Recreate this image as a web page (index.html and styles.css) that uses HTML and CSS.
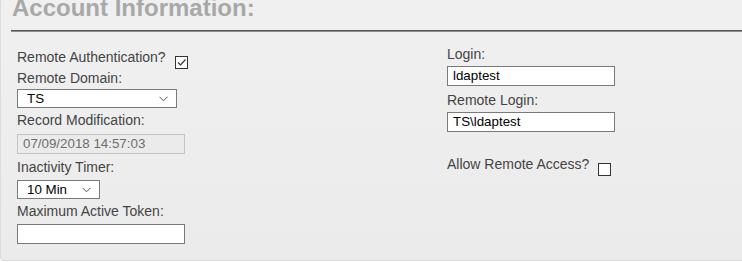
FILE: index.html
```html
<!DOCTYPE html>
<html>
<head>
<meta charset="utf-8">
<link rel="stylesheet" href="styles.css">
</head>
<body>
<div class="panel">
  <div class="title">Account Information:</div>
  <div class="rule"></div>
  <div class="cols">
    <div class="col col-left">
      <div class="check-row r-auth">
        <span class="lbl">Remote Authentication?</span>
        <span class="cbox checked">
          <svg width="11" height="11" viewBox="0 0 11 11"><path d="M2 5.5 L4.5 8 L9.5 2.5" fill="none" stroke="#333" stroke-width="1.2"/></svg>
        </span>
      </div>
      <div class="lbl m3">Remote Domain:</div>
      <div class="sel sel-domain m4">
        <span class="sel-text">TS</span>
        <svg class="chev" width="9" height="6" viewBox="0 0 9 6"><path d="M0.5 0.8 L4.5 4.8 L8.5 0.8" fill="none" stroke="#555" stroke-width="1"/></svg>
      </div>
      <div class="lbl m6">Record Modification:</div>
      <div class="inp disabled m5">07/09/2018 14:57:03</div>
      <div class="lbl m5">Inactivity Timer:</div>
      <div class="sel sel-timer m4">
        <span class="sel-text">10 Min</span>
        <svg class="chev" width="9" height="6" viewBox="0 0 9 6"><path d="M0.5 0.8 L4.5 4.8 L8.5 0.8" fill="none" stroke="#555" stroke-width="1"/></svg>
      </div>
      <div class="lbl m5">Maximum Active Token:</div>
      <div class="inp"></div>
    </div>
    <div class="col col-right">
      <div class="lbl m4">Login:</div>
      <div class="inp wide m6">ldaptest</div>
      <div class="lbl m4">Remote Login:</div>
      <div class="inp wide">TS\ldaptest</div>
      <div class="check-row r-allow">
        <span class="lbl">Allow Remote Access?</span>
        <span class="cbox"></span>
      </div>
    </div>
  </div>
</div>
</body>
</html>
```
FILE: styles.css
```css
html, body {
  margin: 0;
  padding: 0;
  background: #ffffff;
  overflow: hidden;
}
body {
  width: 742px;
  height: 262px;
  font-family: "Liberation Sans", Arial, sans-serif;
}
.panel {
  box-sizing: border-box;
  width: 760px;
  height: 261px;
  border: 1px solid #dcdcdc;
  border-top: none;
  border-radius: 0 0 4px 4px;
  background: linear-gradient(#f0f0f0, #ebebeb);
  padding: 0 0 0 16px;
}
.title {
  height: 30px;
  margin-left: -5px;
  font-size: 24px;
  line-height: 16px;
  font-weight: bold;
  color: #a8a8a8;
  white-space: nowrap;
}
.rule {
  margin-left: -6px;
  height: 0;
  border-top: 1px solid #555555;
  border-bottom: 1px solid #8e8e8e;
}
.cols {
  display: flex;
  align-items: flex-start;
  padding-top: 14px;
}
.col {
  display: flex;
  flex-direction: column;
  align-items: flex-start;
}
.col-left {
  width: 430px;
  padding-top: 3px;
}
.lbl {
  font-size: 14px;
  line-height: 16px;
  height: 16px;
  color: #444444;
  white-space: nowrap;
}
.m3 { margin-bottom: 3px; }
.m4 { margin-bottom: 4px; }
.m5 { margin-bottom: 5px; }
.m6 { margin-bottom: 6px; }
.check-row {
  display: flex;
  align-items: flex-start;
}
.r-auth { margin-bottom: 1px; }
.r-allow { margin-top: 24px; }
.cbox {
  box-sizing: border-box;
  width: 13px;
  height: 13px;
  border: 1px solid #333333;
  background: #ffffff;
  margin-left: 9px;
  margin-top: 7px;
  display: flex;
  align-items: center;
  justify-content: center;
}
.cbox svg { display: block; }
.sel {
  position: relative;
  box-sizing: border-box;
  height: 19px;
  border: 1px solid #7a7a7a;
  background: #ffffff;
  font-size: 13.33px;
  line-height: 17px;
  color: #000000;
  padding-left: 9px;
}
.sel-domain { width: 160px; }
.sel-timer { width: 83px; }
.sel-text { display: block; }
.chev {
  position: absolute;
  right: 8px;
  top: 6px;
}
.inp {
  box-sizing: border-box;
  width: 168px;
  height: 20px;
  border: 1px solid #7a7a7a;
  background: #ffffff;
  font-size: 13.33px;
  line-height: 18px;
  color: #000000;
  padding-left: 5px;
  white-space: nowrap;
}
.inp.wide {
  width: 168px;
  padding-left: 5px;
}
.inp.disabled {
  border-color: #c4c4c4;
  background: #ebebeb;
  color: #6d6d6d;
}
```
